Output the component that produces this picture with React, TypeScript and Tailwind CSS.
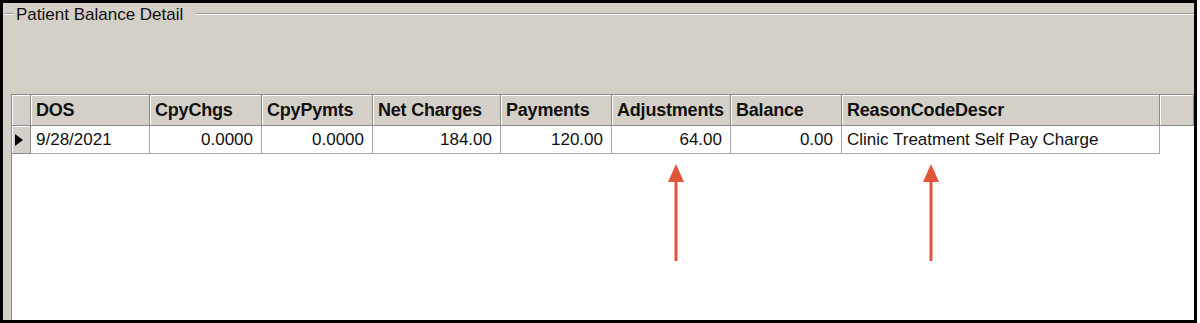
import React from 'react';

type Col = { key: string; title: string; width: string; align: 'left' | 'right' };

const columns: Col[] = [
  { key: 'dos', title: 'DOS', width: 'w-[119px]', align: 'left' },
  { key: 'cpyChgs', title: 'CpyChgs', width: 'w-[112px]', align: 'right' },
  { key: 'cpyPymts', title: 'CpyPymts', width: 'w-[111px]', align: 'right' },
  { key: 'net', title: 'Net Charges', width: 'w-[128px]', align: 'right' },
  { key: 'payments', title: 'Payments', width: 'w-[111px]', align: 'right' },
  { key: 'adj', title: 'Adjustments', width: 'w-[119px]', align: 'right' },
  { key: 'balance', title: 'Balance', width: 'w-[111px]', align: 'right' },
  { key: 'reason', title: 'ReasonCodeDescr', width: 'w-[318px]', align: 'left' },
];

const row: Record<string, string> = {
  dos: '9/28/2021',
  cpyChgs: '0.0000',
  cpyPymts: '0.0000',
  net: '184.00',
  payments: '120.00',
  adj: '64.00',
  balance: '0.00',
  reason: 'Clinic Treatment Self Pay Charge',
};

const Arrow: React.FC<{ left: string }> = ({ left }) => (
  <svg className={`absolute top-[164px] ${left}`} width="18" height="100" viewBox="0 0 18 100">
    <polygon points="9,0 1,18 17,18" fill="#e2553b" />
    <rect x="7.5" y="16" width="3" height="81" fill="#e2553b" />
  </svg>
);

export default function App() {
  return (
    <div className="relative w-[1200px] h-[323px] bg-white font-['Liberation_Sans',Arial,sans-serif] text-[#111]">
      <div className="w-[1197px] h-[323px] border-[3px] border-black bg-[#d4d0c8] flex flex-col">
        {/* group box caption */}
        <div className="h-[91px] flex items-start pt-[2px]">
          <div className="mt-[8px] ml-[2px] w-[8px] border-t border-b border-t-[#9a9a9a] border-b-white" />
          <span className="ml-[3px] text-[17px] leading-[20px]">Patient Balance Detail</span>
          <div className="mt-[8px] ml-[13px] flex-1 border-t border-b border-t-[#9a9a9a] border-b-white" />
        </div>

        {/* grid */}
        <div className="ml-[8px] flex-1 bg-white border-l border-t border-[#8a8a8a] flex flex-col">
          <div className="flex h-[31px] bg-[#d4d0c8]">
            <div className="w-[19px] border-r border-b border-[#8a8a8a] shadow-[inset_1px_1px_0_#fff]" />
            {columns.map((c) => (
              <div
                key={c.key}
                className={`${c.width} border-r border-b border-[#8a8a8a] shadow-[inset_1px_1px_0_#fff] px-[5px] flex items-center text-[18px] font-bold tracking-[-0.2px]`}
              >
                {c.title}
              </div>
            ))}
            <div className="flex-1 border-r border-b border-[#8a8a8a] shadow-[inset_1px_1px_0_#fff]" />
          </div>
          <div className="flex h-[28px]">
            <div className="w-[19px] bg-[#d4d0c8] border-r border-b border-[#8a8a8a] shadow-[inset_1px_1px_0_#fff] flex items-center pl-[3px]">
              <svg width="9" height="12" viewBox="0 0 9 12">
                <polygon points="0,0 8,6 0,12" fill="#000" />
              </svg>
            </div>
            {columns.map((c) => (
              <div
                key={c.key}
                className={`${c.width} border-r border-b border-[#a8a8a8] flex items-center text-[17px] ${c.align === 'right' ? 'justify-end pr-[8px]' : 'justify-start pl-[5px]'}`}
              >
                {row[c.key]}
              </div>
            ))}
          </div>
        </div>
      </div>

      <Arrow left="left-[667px]" />
      <Arrow left="left-[922px]" />
    </div>
  );
}
